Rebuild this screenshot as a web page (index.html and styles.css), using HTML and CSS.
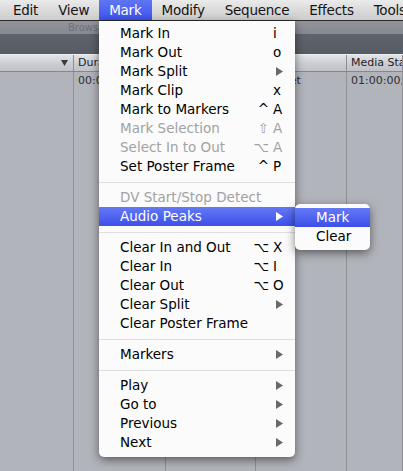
FILE: index.html
```html
<!DOCTYPE html>
<html>
<head>
<meta charset="utf-8">
<link rel="stylesheet" href="styles.css">
</head>
<body>
<div class="screen">
  <div class="menubar">
    <span class="mb-item first">Edit</span>
    <span class="mb-item">View</span>
    <span class="mb-item active">Mark</span>
    <span class="mb-item">Modify</span>
    <span class="mb-item">Sequence</span>
    <span class="mb-item">Effects</span>
    <span class="mb-item">Tools</span>
  </div>
  <div class="tabband"><span class="tabtitle">Browser</span></div>
  <div class="toolband"></div>
  <div class="thead">
    <div class="th c-name"><svg class="sort" width="7" height="6" viewBox="0 0 7 6"><polygon points="0,0 7,0 3.5,6" fill="#3a3a3a"/></svg></div>
    <div class="th">Duration</div>
    <div class="th">In</div>
    <div class="th">Out</div>
    <div class="th">Media Start</div>
  </div>
  <div class="tbody">
    <div class="td c-name"></div>
    <div class="td">00:00:00;00</div>
    <div class="td">Not Set</div>
    <div class="td">Not Set</div>
    <div class="td">01:00:00;00</div>
  </div>

  <div class="menu">
    <div class="row"><span class="label">Mark In</span><span class="sc"><span class="key">i</span></span></div>
    <div class="row"><span class="label">Mark Out</span><span class="sc"><span class="key">o</span></span></div>
    <div class="row"><span class="label">Mark Split</span><span class="sc"><span class="key"><svg class="arrow" width="7" height="9" viewBox="0 0 7 9"><polygon points="0,0 7,4.5 0,9"/></svg></span></span></div>
    <div class="row"><span class="label">Mark Clip</span><span class="sc"><span class="key">x</span></span></div>
    <div class="row"><span class="label">Mark to Markers</span><span class="sc"><span class="mod">^</span><span class="key">A</span></span></div>
    <div class="row disabled"><span class="label">Mark Selection</span><span class="sc"><span class="mod">⇧</span><span class="key">A</span></span></div>
    <div class="row disabled"><span class="label">Select In to Out</span><span class="sc"><span class="mod">⌥</span><span class="key">A</span></span></div>
    <div class="row"><span class="label">Set Poster Frame</span><span class="sc"><span class="mod">^</span><span class="key">P</span></span></div>
    <div class="sep"></div>
    <div class="row disabled"><span class="label">DV Start/Stop Detect</span></div>
    <div class="row hl"><span class="label">Audio Peaks</span><span class="sc"><span class="key"><svg class="arrow" width="7" height="9" viewBox="0 0 7 9"><polygon points="0,0 7,4.5 0,9"/></svg></span></span></div>
    <div class="sep"></div>
    <div class="row"><span class="label">Clear In and Out</span><span class="sc"><span class="mod">⌥</span><span class="key">X</span></span></div>
    <div class="row"><span class="label">Clear In</span><span class="sc"><span class="mod">⌥</span><span class="key">I</span></span></div>
    <div class="row"><span class="label">Clear Out</span><span class="sc"><span class="mod">⌥</span><span class="key">O</span></span></div>
    <div class="row"><span class="label">Clear Split</span><span class="sc"><span class="key"><svg class="arrow" width="7" height="9" viewBox="0 0 7 9"><polygon points="0,0 7,4.5 0,9"/></svg></span></span></div>
    <div class="row"><span class="label">Clear Poster Frame</span></div>
    <div class="sep"></div>
    <div class="row"><span class="label">Markers</span><span class="sc"><span class="key"><svg class="arrow" width="7" height="9" viewBox="0 0 7 9"><polygon points="0,0 7,4.5 0,9"/></svg></span></span></div>
    <div class="sep"></div>
    <div class="row"><span class="label">Play</span><span class="sc"><span class="key"><svg class="arrow" width="7" height="9" viewBox="0 0 7 9"><polygon points="0,0 7,4.5 0,9"/></svg></span></span></div>
    <div class="row"><span class="label">Go to</span><span class="sc"><span class="key"><svg class="arrow" width="7" height="9" viewBox="0 0 7 9"><polygon points="0,0 7,4.5 0,9"/></svg></span></span></div>
    <div class="row"><span class="label">Previous</span><span class="sc"><span class="key"><svg class="arrow" width="7" height="9" viewBox="0 0 7 9"><polygon points="0,0 7,4.5 0,9"/></svg></span></span></div>
    <div class="row"><span class="label">Next</span><span class="sc"><span class="key"><svg class="arrow" width="7" height="9" viewBox="0 0 7 9"><polygon points="0,0 7,4.5 0,9"/></svg></span></span></div>
  </div>

  <div class="submenu">
    <div class="row hl"><span class="label">Mark</span></div>
    <div class="row"><span class="label">Clear</span></div>
  </div>
</div>
</body>
</html>
```

FILE: styles.css
```css
html, body {
  margin: 0;
  padding: 0;
}
body {
  width: 403px;
  height: 471px;
  overflow: hidden;
  font-family: "DejaVu Sans", "Noto Sans", sans-serif;
  background: #b2b4bb;
}
.screen {
  position: relative;
  width: 403px;
  height: 471px;
  display: flex;
  flex-direction: column;
  overflow: hidden;
}

/* menu bar */
.menubar {
  height: 20px;
  flex: none;
  display: flex;
  align-items: stretch;
  background: linear-gradient(#ebebeb, #dadada 50%, #cdcdcd);
  border-bottom: 1px solid #2a2a2a;
  font-size: 13.5px;
  line-height: 20px;
  color: #141414;
  white-space: nowrap;
  letter-spacing: -0.25px;
}
.mb-item {
  padding: 0 10px;
}
.mb-item.first {
  margin-left: 3px;
}
.mb-item.active {
  color: #fff;
  background: linear-gradient(#6076f5, #3d52ea);
}

/* window bands */
.tabband {
  height: 13px;
  flex: none;
  background: linear-gradient(#92949c, #878990);
  font-size: 10px;
  line-height: 13px;
  color: #6d7078;
  padding-left: 68px;
}
.toolband {
  height: 20px;
  flex: none;
  background: linear-gradient(#5f636b, #575b63);
}

/* table */
.thead, .tbody {
  display: grid;
  grid-template-columns: 74px 92px 90px 91px 1fr;
}
.thead {
  height: 16px;
  flex: none;
  background: linear-gradient(#e2e3e7, #cacbd0 60%, #c0c2c7);
  border-top: 1px solid #eeeff2;
  border-bottom: 1px solid #85878d;
  font-size: 11px;
  line-height: 16px;
  color: #222;
}
.th {
  border-right: 1px solid #8d8f95;
  padding-left: 4px;
  white-space: nowrap;
  overflow: hidden;
}
.th.c-name {
  display: flex;
  justify-content: flex-end;
  align-items: center;
  padding-right: 5px;
}
.tbody {
  flex: 1;
  font-size: 11px;
  line-height: 18px;
  color: #2e2e2e;
}
.td {
  border-right: 1px solid #8f9197;
  padding-left: 4px;
  white-space: nowrap;
  overflow: hidden;
}

/* menus */
.menu, .submenu {
  position: absolute;
  background: #fbfbfb;
  font-size: 13.5px;
  color: #000;
  box-shadow: 0 3px 10px rgba(0, 0, 0, 0.5);
}
.menu {
  left: 99px;
  top: 21px;
  width: 196px;
  padding: 3px 0 5px;
  border-radius: 0 0 5px 5px;
}
.submenu {
  left: 295px;
  top: 204px;
  width: 75px;
  padding: 4px 0;
  border-radius: 5px;
}
.row {
  display: flex;
  height: 19px;
  line-height: 19px;
  white-space: nowrap;
}
.label {
  flex: 1;
  padding-left: 21px;
}
.sc {
  padding-right: 10px;
  display: flex;
  justify-content: flex-end;
}
.mod {
  margin-right: 4px;
}
.key {
  width: 12px;
  display: flex;
  align-items: center;
}
.arrow {
  margin-left: 3px;
  fill: #6a6a6a;
}
.row.disabled {
  color: #a2a2a2;
}
.row.hl {
  color: #fff;
  background: linear-gradient(#6479f5, #3c50ea);
}
.row.hl .arrow {
  fill: #fff;
}
.sep {
  height: 12px;
  display: flex;
  align-items: center;
}
.sep::before {
  content: "";
  flex: 1;
  height: 1px;
  background: #dedede;
}
```
